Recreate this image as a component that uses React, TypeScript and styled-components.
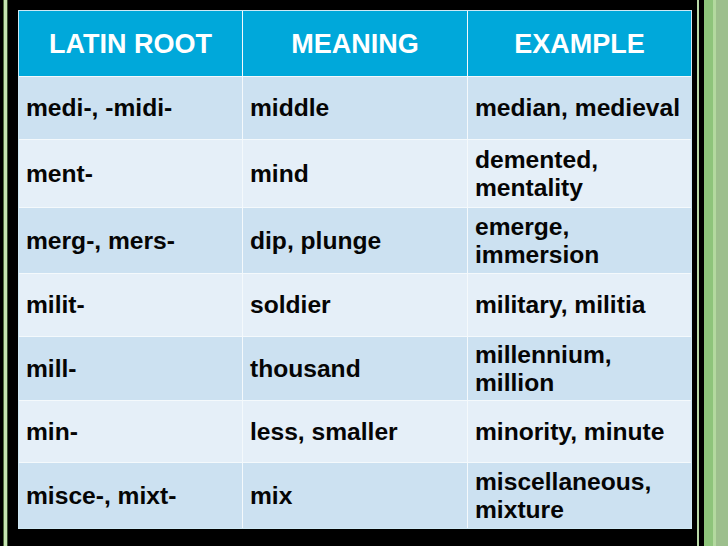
import React from "react";
import styled, { createGlobalStyle } from "styled-components";

const Global = createGlobalStyle`
  html, body { margin: 0; padding: 0; background: #000; }
  body { font-family: "Liberation Sans", Arial, sans-serif; }
`;

const Page = styled.div`
  width: 728px;
  height: 546px;
  background: #000;
  display: flex;
  overflow: hidden;
`;

const LeftStrip = styled.div`
  width: 18px;
  flex: none;
  background: linear-gradient(
    to right,
    #000 0 3px,
    #4d6b3c 3px 4px,
    #c6e4b2 4px 7px,
    #3a5230 7px 8px,
    #000 8px 18px
  );
`;

const RightStrip = styled.div`
  flex: 1;
  background: linear-gradient(
    to right,
    #000 0 5px,
    #b9d9a8 5px 7px,
    #000 7px 12px,
    #8ec47b 12px 21px,
    #b3d99f 21px 24px,
    #9dbf8d 24px 100%
  );
`;

const Main = styled.div`
  padding-top: 10px;
  flex: none;
`;

const Grid = styled.div`
  display: grid;
  grid-template-columns: 223px 224px 223px;
  grid-template-rows: 65px 62px 67px 65px 62px 63px 61px 65px;
  gap: 1px;
  background: #f4f9fc;
  border: 1px solid #cfe9f5;
`;

const HeadCell = styled.div`
  background: #00a8da;
  color: #fff;
  font-weight: bold;
  font-size: 27px;
  display: flex;
  align-items: center;
  justify-content: center;
  padding-top: 2px;
`;

const Cell = styled.div<{ $alt: boolean }>`
  background: ${(p) => (p.$alt ? "#e5eff8" : "#cce1f1")};
  color: #050505;
  font-weight: bold;
  font-size: 24.6px;
  line-height: 28px;
  display: flex;
  align-items: center;
  padding: 0 6px 0 7px;
  white-space: nowrap;
`;

const headers = ["LATIN ROOT", "MEANING", "EXAMPLE"];

const rows: string[][] = [
  ["medi-, -midi-", "middle", "median, medieval"],
  ["ment-", "mind", "demented,\nmentality"],
  ["merg-, mers-", "dip, plunge", "emerge,\nimmersion"],
  ["milit-", "soldier", "military, militia"],
  ["mill-", "thousand", "millennium,\nmillion"],
  ["min-", "less, smaller", "minority, minute"],
  ["misce-, mixt-", "mix", "miscellaneous,\nmixture"],
];

export default function App() {
  return (
    <>
      <Global />
      <Page>
        <LeftStrip />
        <Main>
          <Grid>
            {headers.map((h) => (
              <HeadCell key={h}>{h}</HeadCell>
            ))}
            {rows.map((r, i) =>
              r.map((c, j) => (
                <Cell key={`${i}-${j}`} $alt={i % 2 === 1}>
                  <span>
                    {c.split("\n").map((line, k) => (
                      <React.Fragment key={k}>
                        {k > 0 && <br />}
                        {line}
                      </React.Fragment>
                    ))}
                  </span>
                </Cell>
              ))
            )}
          </Grid>
        </Main>
        <RightStrip />
      </Page>
    </>
  );
}
